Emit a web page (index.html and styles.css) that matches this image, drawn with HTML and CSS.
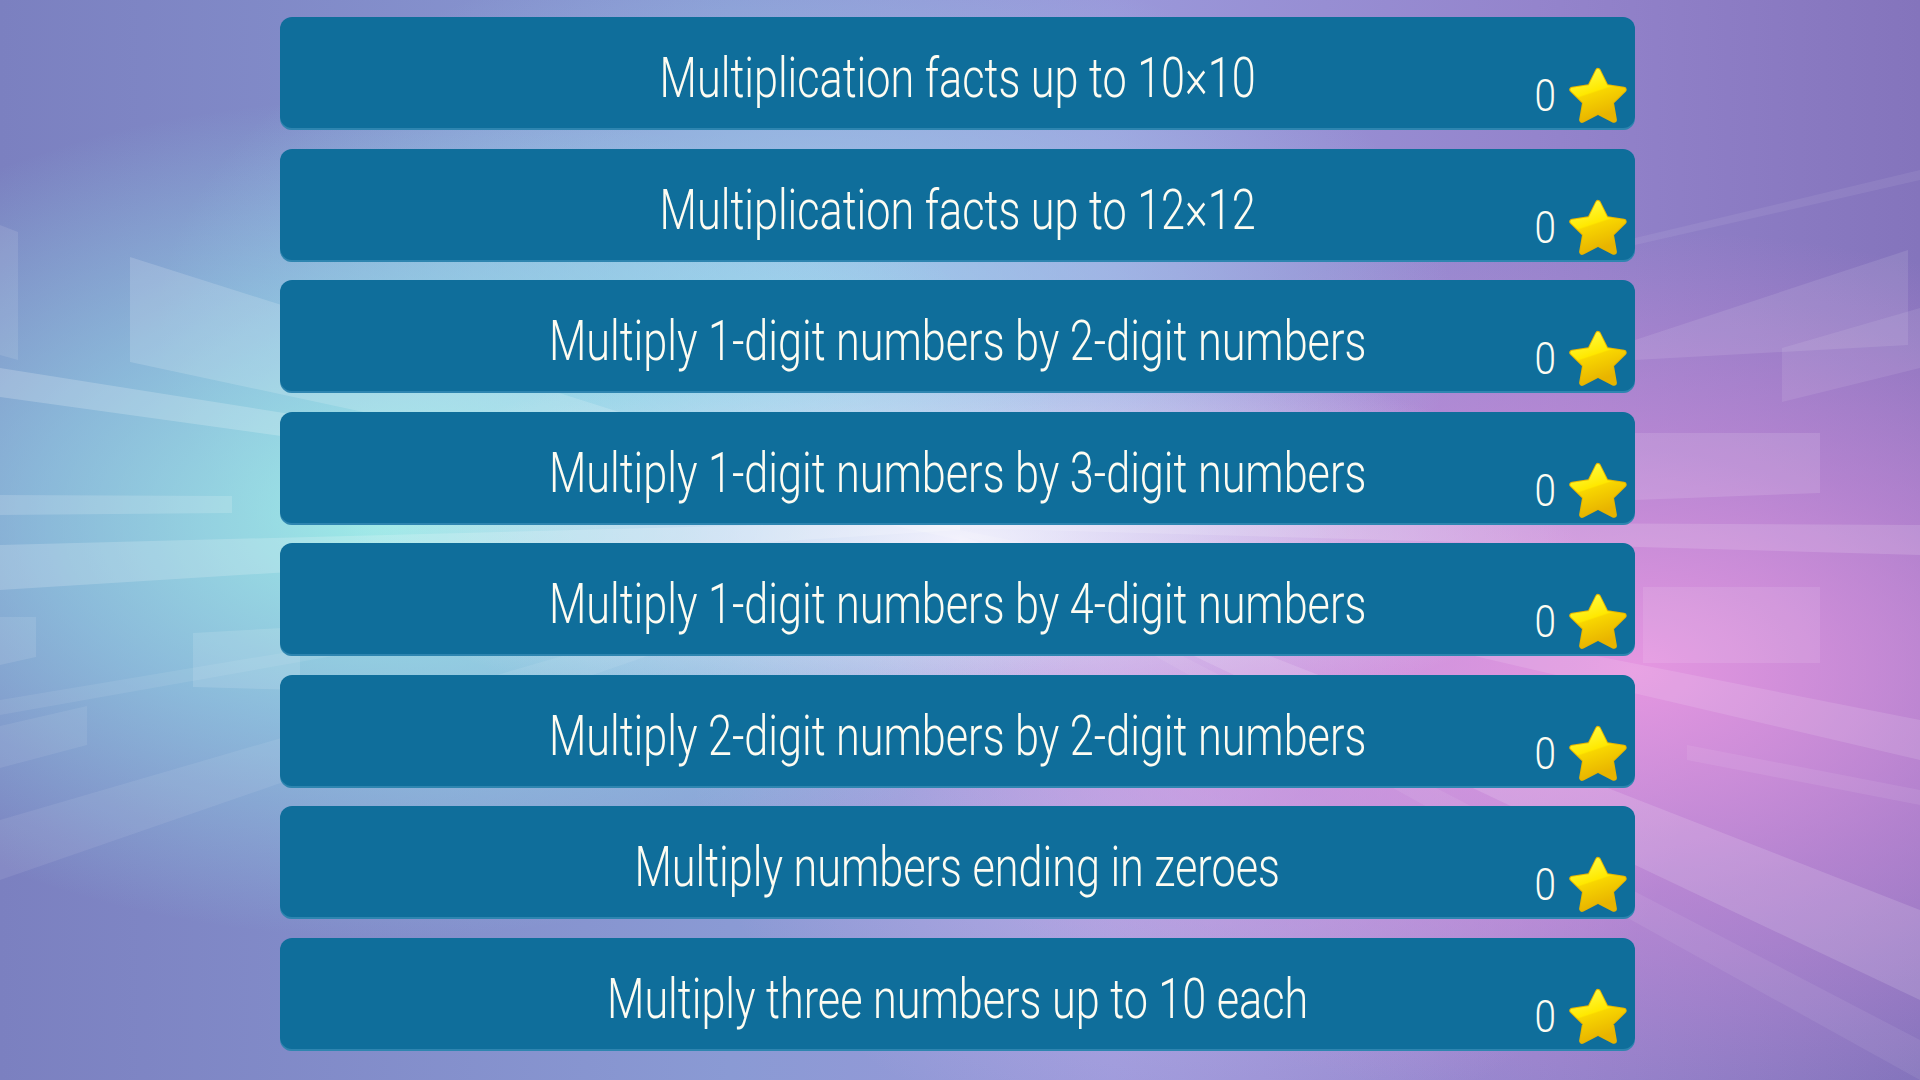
FILE: index.html
```html
<!DOCTYPE html>
<html lang="en">
<head>
<meta charset="utf-8">
<title>Multiplication</title>
<link rel="stylesheet" href="styles.css">
</head>
<body>
<svg class="rays" viewBox="0 0 1920 1080" preserveAspectRatio="none" aria-hidden="true">
  <g fill="#ffffff">
    <polygon opacity="0.10" points="0,225 18,232 18,360 0,355"/>
    <polygon opacity="0.16" points="130,257 960,520 960,540 130,362"/>
    <polygon opacity="0.20" points="0,368 960,520 960,530 0,397"/>
    <polygon opacity="0.16" points="0,495 232,496 232,513 0,515"/>
    <polygon opacity="0.18" points="0,545 960,520 960,530 0,590"/>
    <polygon opacity="0.10" points="0,617 36,617 36,657 0,665"/>
    <polygon opacity="0.12" points="193,633 300,627 300,690 193,687"/>
    <polygon opacity="0.08" points="0,700 960,540 960,545 0,715"/>
    <polygon opacity="0.08" points="0,726 87,706 87,745 0,768"/>
    <polygon opacity="0.08" points="0,820 960,540 960,548 0,880"/>
    <polygon opacity="0.10" points="1635,340 1908,250 1908,345 1635,360"/>
    <polygon opacity="0.09" points="1782,348 1920,308 1920,368 1782,402"/>
    <polygon opacity="0.07" points="1635,238 1920,170 1920,180 1635,245"/>
    <polygon opacity="0.12" points="1635,433 1820,433 1820,493 1635,500"/>
    <polygon opacity="0.14" points="960,520 1920,525 1920,555 960,528"/>
    <polygon opacity="0.10" points="1643,587 1820,587 1820,663 1643,663"/>
    <polygon opacity="0.12" points="960,530 1920,720 1920,760 960,536"/>
    <polygon opacity="0.08" points="1687,745 1920,790 1920,805 1687,760"/>
    <polygon opacity="0.14" points="960,535 1920,910 1920,1000 960,545"/>
    <polygon opacity="0.07" points="960,540 1920,1040 1920,1080 960,548"/>
  </g>
</svg>
<svg width="0" height="0" class="defs" aria-hidden="true">
  <defs>
    <linearGradient id="starFill" x1="0" y1="0" x2="0.35" y2="1">
      <stop offset="0" stop-color="#ffff4a"/>
      <stop offset="0.5" stop-color="#ffe800"/>
      <stop offset="0.53" stop-color="#f8d600"/>
      <stop offset="1" stop-color="#e8b400"/>
    </linearGradient>
    <symbol id="star" viewBox="0 0 60 57">
      <polygon points="30,4 37.94,20.08 55.68,22.66 42.84,35.17 45.87,52.84 30,44.5 14.13,52.84 17.16,35.17 4.32,22.66 22.06,20.08" fill="url(#starFill)" stroke="#e6b400" stroke-width="6" stroke-linejoin="round"/>
      <polygon points="30,4 37.94,20.08 55.68,22.66 42.84,35.17 45.87,52.84 30,44.5 14.13,52.84 17.16,35.17 4.32,22.66 22.06,20.08" fill="url(#starFill)" stroke="url(#starFill)" stroke-width="4" stroke-linejoin="round"/>
    </symbol>
  </defs>
</svg>
<main class="list">
  <div class="row"><span class="title">Multiplication facts up to 10×10</span><div class="score"><span class="num">0</span><svg class="star"><use href="#star"/></svg></div></div>
  <div class="row"><span class="title">Multiplication facts up to 12×12</span><div class="score"><span class="num">0</span><svg class="star"><use href="#star"/></svg></div></div>
  <div class="row"><span class="title">Multiply 1-digit numbers by 2-digit numbers</span><div class="score"><span class="num">0</span><svg class="star"><use href="#star"/></svg></div></div>
  <div class="row"><span class="title">Multiply 1-digit numbers by 3-digit numbers</span><div class="score"><span class="num">0</span><svg class="star"><use href="#star"/></svg></div></div>
  <div class="row"><span class="title">Multiply 1-digit numbers by 4-digit numbers</span><div class="score"><span class="num">0</span><svg class="star"><use href="#star"/></svg></div></div>
  <div class="row"><span class="title">Multiply 2-digit numbers by 2-digit numbers</span><div class="score"><span class="num">0</span><svg class="star"><use href="#star"/></svg></div></div>
  <div class="row"><span class="title">Multiply numbers ending in zeroes</span><div class="score"><span class="num">0</span><svg class="star"><use href="#star"/></svg></div></div>
  <div class="row"><span class="title">Multiply three numbers up to 10 each</span><div class="score"><span class="num">0</span><svg class="star"><use href="#star"/></svg></div></div>
</main>
</body>
</html>
```
FILE: styles.css
```css
html, body {
  margin: 0;
  padding: 0;
  width: 1920px;
  height: 1080px;
  overflow: hidden;
}
body {
  position: relative;
  font-family: Roboto, "Liberation Sans", sans-serif;
  background:
    radial-gradient(ellipse 620px 200px at 50% 50%, rgba(250,246,255,0.9) 0%, rgba(240,234,252,0.5) 45%, rgba(240,234,252,0) 100%),
    radial-gradient(ellipse 700px 420px at 20% 48%, rgba(160,244,234,0.9) 0%, rgba(150,228,236,0.55) 50%, rgba(150,228,236,0) 100%),
    radial-gradient(ellipse 650px 380px at 42% 30%, rgba(168,224,244,0.75) 0%, rgba(168,224,244,0.35) 55%, rgba(168,224,244,0) 100%),
    radial-gradient(ellipse 760px 440px at 85% 62%, rgba(234,152,226,0.95) 0%, rgba(215,140,220,0.55) 50%, rgba(215,140,220,0) 100%),
    radial-gradient(ellipse 500px 400px at 62% 70%, rgba(215,190,240,0.6) 0%, rgba(215,190,240,0) 100%),
    linear-gradient(90deg, #7b80c0 0%, #8a9ad4 38%, #9a98da 58%, #9484cc 80%, #8474bc 100%);
}
.rays {
  position: absolute;
  left: 0;
  top: 0;
  width: 1920px;
  height: 1080px;
}
.defs {
  position: absolute;
}
.list {
  position: relative;
  width: 1355px;
  margin-left: 280px;
  padding-top: 17px;
  display: flex;
  flex-direction: column;
  gap: 18.5px;
}
.row {
  height: 113px;
  box-sizing: border-box;
  background: #0f6e9b;
  border-radius: 12px;
  box-shadow: inset 0 -2px 0 rgba(120,190,225,0.3);
  display: grid;
  grid-template-columns: 1fr auto 1fr;
}
.title {
  grid-column: 2;
  padding-top: 34px;
  font-size: 55px;
  font-weight: 300;
  line-height: 1;
  color: #fdfcf2;
  white-space: nowrap;
  transform: scaleX(0.785);
  transform-origin: 50% 0;
}
.score {
  grid-column: 3;
  justify-self: end;
  display: flex;
  align-items: flex-end;
  padding-right: 7px;
}
.num {
  font-size: 45px;
  font-weight: 300;
  line-height: 1;
  color: #fdfcf2;
  margin-bottom: 12px;
  margin-right: 12px;
  transform: scaleX(0.86);
  transform-origin: 100% 100%;
}
.star {
  width: 60px;
  height: 57px;
  margin-bottom: 6px;
}
```
